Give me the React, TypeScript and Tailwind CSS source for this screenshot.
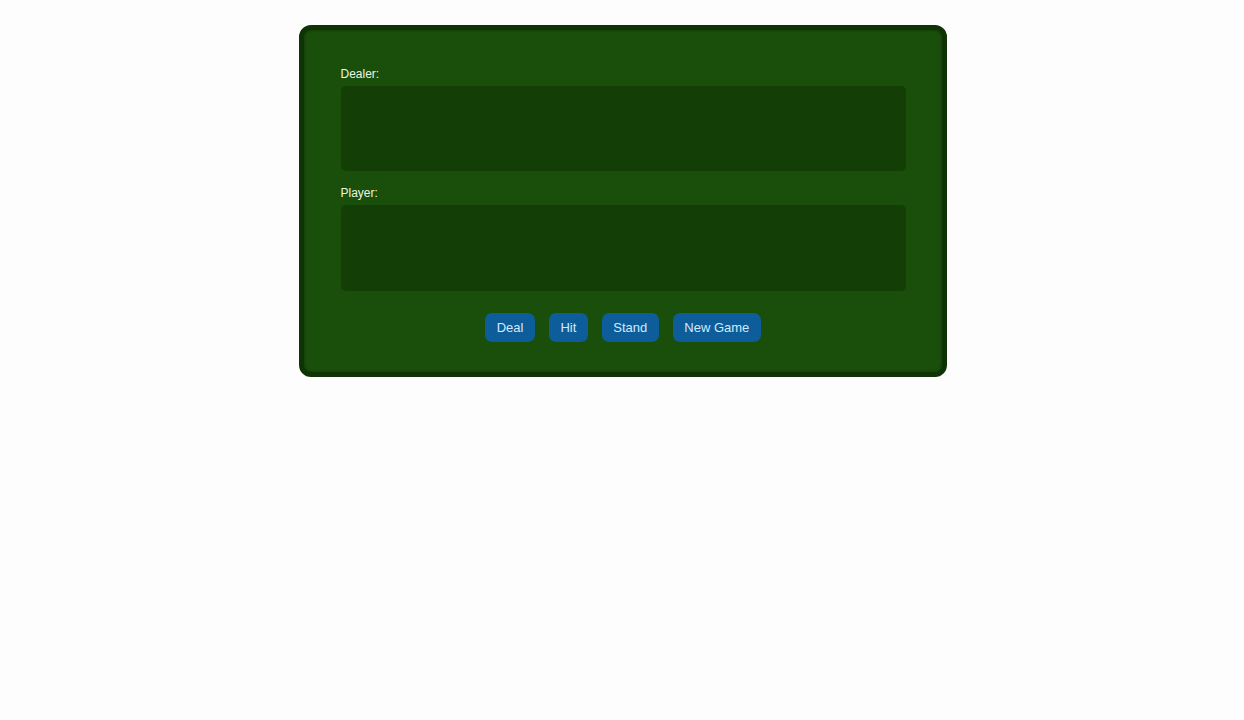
import React from "react";

const buttons = ["Deal", "Hit", "Stand", "New Game"];

export default function App() {
    return (
        <div className="min-h-screen bg-[#fdfdfd] pt-[25px] pl-[1px]" style={{ fontFamily: "'Liberation Sans', Arial, sans-serif" }}>
            <div className="mx-auto w-[648px] rounded-[12px] border-[5px] border-[#0f3305] bg-[#1a4e0b] pl-[37px] pr-[36px] pt-[36px] pb-[30px] shadow-[inset_0_0_3px_rgba(0,0,0,0.35)]">
                {/* Dealer */}
                <div className="mb-[14px]">
                    <div className="mb-[4px] h-[16px] text-[12px] leading-[16px] text-[#eaf6e4]">Dealer:</div>
                    <div className="h-[85px] rounded-[5px] bg-[#133f07]"></div>
                </div>

                {/* Player */}
                <div>
                    <div className="mb-[4px] h-[16px] text-[12px] leading-[16px] text-[#eaf6e4]">Player:</div>
                    <div className="h-[86px] rounded-[5px] bg-[#133f07]"></div>
                </div>

                <div className="mt-[22px] flex justify-center gap-[14px]">
                    {buttons.map((b) => (
                        <button
                            key={b}
                            className="h-[29px] rounded-[7px] bg-[#0c5d99] px-[11.5px] text-[13px] text-[#d3e9ff]"
                        >
                            {b}
                        </button>
                    ))}
                </div>
            </div>
        </div>
    );
}
